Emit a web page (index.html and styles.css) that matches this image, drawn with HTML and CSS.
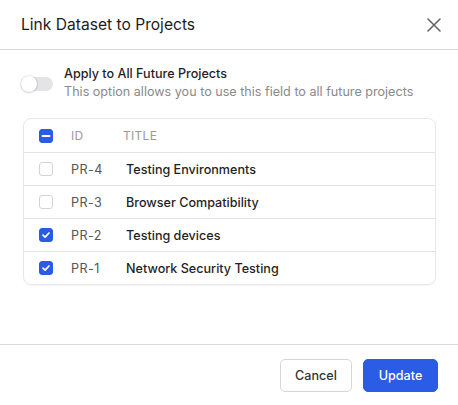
FILE: index.html
```html
<!DOCTYPE html>
<html>
<head>
<meta charset="utf-8">
<link rel="stylesheet" href="styles.css">
</head>
<body>
<div class="modal">
  <div class="header">
    <h1 class="title">Link Dataset to Projects</h1>
    <button class="close" aria-label="Close">
      <svg width="14" height="14" viewBox="0 0 14 14"><path d="M1 1L13 13M13 1L1 13" stroke="#666" stroke-width="1.6" stroke-linecap="round"/></svg>
    </button>
  </div>
  <div class="body">
    <div class="option">
      <span class="toggle"><span class="knob"></span></span>
      <div class="option-text">
        <div class="option-label">Apply to All Future Projects</div>
        <div class="option-desc">This option allows you to use this field to all future projects</div>
      </div>
    </div>
    <div class="table">
      <div class="row head">
        <span class="cb cb-on"><svg width="14" height="14" viewBox="0 0 14 14"><path d="M3.5 7H10.5" stroke="#fff" stroke-width="2" stroke-linecap="round"/></svg></span>
        <span class="col-id">ID</span>
        <span class="col-title">TITLE</span>
      </div>
      <div class="row">
        <span class="cb"></span>
        <span class="col-id">PR-4</span>
        <span class="col-title">Testing Environments</span>
      </div>
      <div class="row">
        <span class="cb"></span>
        <span class="col-id">PR-3</span>
        <span class="col-title">Browser Compatibility</span>
      </div>
      <div class="row">
        <span class="cb cb-on"><svg width="14" height="14" viewBox="0 0 14 14"><path d="M4 7.2L6.1 9.2L10 5" fill="none" stroke="#fff" stroke-width="1.7" stroke-linecap="round" stroke-linejoin="round"/></svg></span>
        <span class="col-id">PR-2</span>
        <span class="col-title">Testing devices</span>
      </div>
      <div class="row">
        <span class="cb cb-on"><svg width="14" height="14" viewBox="0 0 14 14"><path d="M4 7.2L6.1 9.2L10 5" fill="none" stroke="#fff" stroke-width="1.7" stroke-linecap="round" stroke-linejoin="round"/></svg></span>
        <span class="col-id">PR-1</span>
        <span class="col-title">Network Security Testing</span>
      </div>
    </div>
  </div>
  <div class="footer">
    <button class="btn btn-secondary">Cancel</button>
    <button class="btn btn-primary">Update</button>
  </div>
</div>
</body>
</html>
```
FILE: styles.css
```css
* { box-sizing: border-box; }
html, body { margin: 0; padding: 0; background: #fff; }
body {
  font-family: Inter, "Noto Sans", sans-serif;
  color: #1f2328;
  width: 458px;
  height: 405px;
  overflow: hidden;
}
.modal { display: flex; flex-direction: column; height: 405px; }
.header {
  height: 50px;
  display: flex;
  align-items: center;
  justify-content: space-between;
  padding: 0 16px 0 21px;
  border-bottom: 1px solid #d9d9d9;
}
.title {
  margin: 0;
  font-size: 15.6px;
  font-weight: 400;
  color: #1c1c1c;
}
.close {
  border: 0;
  background: none;
  padding: 0;
  width: 16px;
  height: 16px;
  display: flex;
  align-items: center;
  justify-content: center;
}
.body { flex: 1; padding: 15px 22px 0 23px; }
.option { display: flex; align-items: center; gap: 11px; margin-left: -3px; }
.toggle {
  position: relative;
  width: 32px;
  height: 14px;
  border-radius: 7px;
  background: #e4e4e6;
  flex-shrink: 0;
  margin-top: 2px;
  margin-left: 1px;
}
.knob {
  position: absolute;
  left: 0;
  top: -1px;
  width: 16px;
  height: 16px;
  border-radius: 50%;
  background: #fff;
  box-shadow: 0 0 2px rgba(0,0,0,0.25), 0 1px 2px rgba(0,0,0,0.1);
}
.option-label { font-size: 12.6px; font-weight: 500; color: #1f1f1f; line-height: 18px; }
.option-desc { font-size: 12.6px; color: #8a8a8a; line-height: 18px; }
.table {
  margin-top: 17px;
  border: 1px solid #e8e8ea;
  border-radius: 8px;
  box-shadow: 0 1px 2px rgba(0,0,0,0.04);
}
.row {
  display: flex;
  align-items: center;
  height: 33px;
  border-top: 1px solid #e3e3e5;
  font-size: 12.6px;
}
.row.head { border-top: 0; height: 33px; }
.cb {
  width: 14px;
  height: 14px;
  margin-left: 15px;
  border: 1px solid #d4d4d6;
  border-radius: 3px;
  flex-shrink: 0;
  display: flex;
}
.cb-on { background: #2b5be4; border-color: #2b5be4; }
.cb svg { margin: -1px; }
.col-id { width: 55px; margin-left: 18px; color: #555; letter-spacing: 0.4px; }
.col-title { color: #1f1f1f; font-weight: 500; }
.head .col-id, .head .col-title { color: #9a9a9a; font-weight: 400; font-size: 12px; letter-spacing: 0.3px; }
.head .col-title { margin-left: -3px; }
.footer {
  height: 61px;
  border-top: 1px solid #d9d9d9;
  display: flex;
  justify-content: flex-end;
  align-items: flex-start;
  gap: 11px;
  padding: 14px 20px 0 0;
}
.btn {
  height: 33px;
  border-radius: 5px;
  font-family: inherit;
  font-size: 12.6px;
  font-weight: 500;
  padding: 0 10px;
  cursor: pointer;
}
.btn-secondary { background: #fff; border: 1px solid #d6d6d8; color: #333; width: 72px; }
.btn-primary { background: #2b5ce6; border: 1px solid #2b5ce6; color: #fff; width: 75px; }
```
